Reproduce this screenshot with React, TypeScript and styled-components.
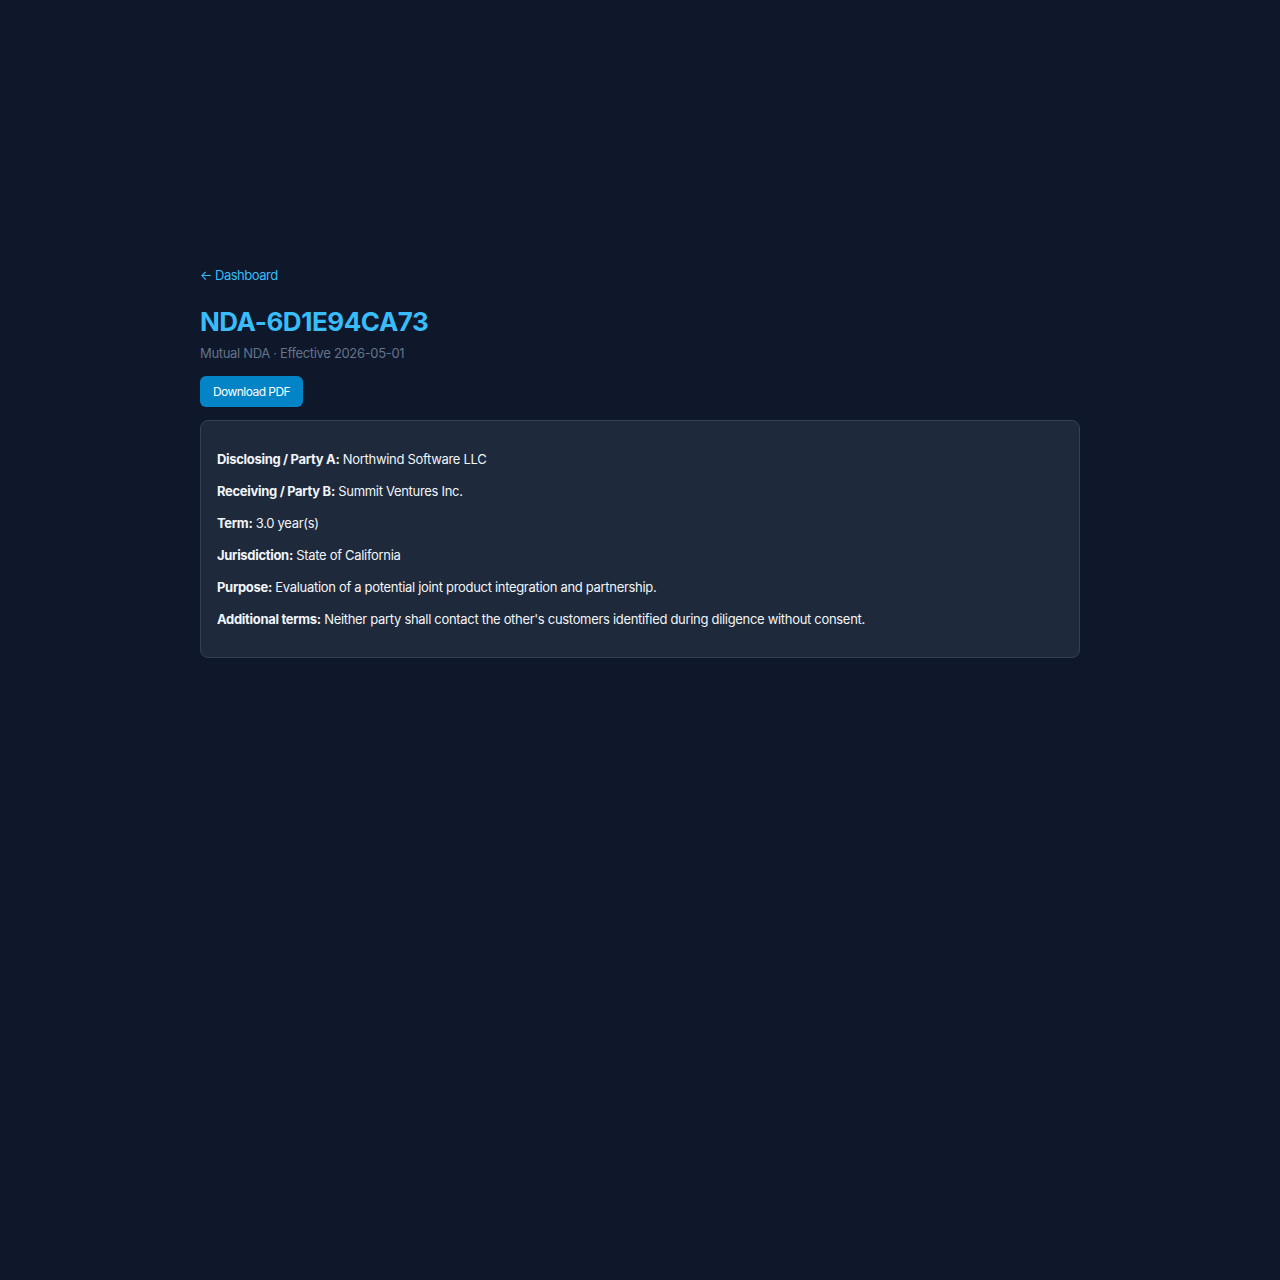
import styled, { createGlobalStyle } from 'styled-components';

const GlobalStyle = createGlobalStyle`
    html, body {
        margin: 0;
        background: #0f172a;
        font-family: Inter, "Noto Sans", sans-serif;
        color: #e2e8f0;
    }
`;

const Page = styled.main`
    max-width: 880px;
    margin: 0 auto;
    padding: 264px 0 40px;
`;

const BackLink = styled.a`
    display: inline-block;
    color: #38bdf8;
    font-size: 13px;
    line-height: 18px;
    letter-spacing: -0.5px;
    text-decoration: none;
`;

const Title = styled.h1`
    margin: 22px 0 0;
    color: #38bdf8;
    font-size: 26px;
    line-height: 32px;
    font-weight: 700;
    letter-spacing: -0.45px;
`;

const Meta = styled.div`
    margin-top: 6px;
    color: #64748b;
    font-size: 13px;
    line-height: 18px;
    letter-spacing: -0.33px;
`;

const Button = styled.button`
    margin-top: 14px;
    height: 31px;
    padding: 0 13px;
    border: none;
    border-radius: 6px;
    background: #0284c7;
    color: #fff;
    font-family: inherit;
    font-size: 12px;
    letter-spacing: -0.55px;
    cursor: pointer;
`;

const Card = styled.section`
    margin-top: 13px;
    padding: 16px;
    background: #1e293b;
    border: 1px solid #334155;
    border-radius: 8px;
`;

const Row = styled.p`
    margin: 12px 0;
    font-size: 13px;
    line-height: 20px;
    letter-spacing: -0.31px;
    color: #f1f5f9;

    strong {
        font-weight: 700;
    }
`;

const fields: [string, string][] = [
    ['Disclosing / Party A:', 'Northwind Software LLC'],
    ['Receiving / Party B:', 'Summit Ventures Inc.'],
    ['Term:', '3.0 year(s)'],
    ['Jurisdiction:', 'State of California'],
    ['Purpose:', 'Evaluation of a potential joint product integration and partnership.'],
    ['Additional terms:', "Neither party shall contact the other's customers identified during diligence without consent."],
];

const App = () => {
    return (
        <>
            <GlobalStyle />
            <Page>
                <BackLink href="#">← Dashboard</BackLink>
                <Title>NDA-6D1E94CA73</Title>
                <Meta>Mutual NDA · Effective 2026-05-01</Meta>
                <Button>Download PDF</Button>
                <Card>
                    {fields.map(([label, value]) => (
                        <Row key={label}>
                            <strong>{label}</strong> {value}
                        </Row>
                    ))}
                </Card>
            </Page>
        </>
    );
};

export default App;
